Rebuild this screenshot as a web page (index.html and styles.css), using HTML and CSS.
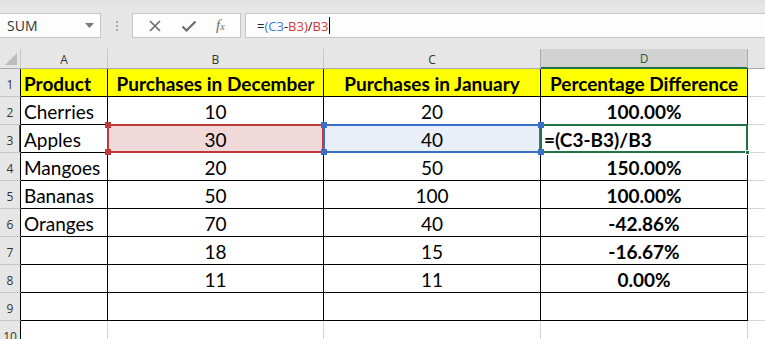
FILE: index.html
```html
<!DOCTYPE html>
<html lang="en">
<head>
    <meta charset="UTF-8">
    <meta name="viewport" content="width=device-width, initial-scale=1.0">
    <title>Percentage Difference</title>
    <link rel="stylesheet" href="styles.css">
</head>
<body>
    <div class="toolbar">
        <div class="name-box">
            <span>SUM</span>
            <svg class="drop" width="9" height="5" viewBox="0 0 9 5"><path d="M0 0h9L4.5 5z" fill="#7a7a7a"/></svg>
        </div>
        <div class="grip"><i></i><i></i><i></i></div>
        <div class="fx-buttons">
            <svg width="14" height="14" viewBox="0 0 14 14"><path d="M2 2l10 10M12 2L2 12" stroke="#6b6b6b" stroke-width="1.6" fill="none"/></svg>
            <svg width="16" height="14" viewBox="0 0 16 14"><path d="M1.5 7.5l4 4L14.5 2.5" stroke="#6b6b6b" stroke-width="2.2" fill="none"/></svg>
            <span class="fx">f<sub>x</sub></span>
        </div>
        <div class="formula">
            <span>=</span><span class="ref-c">(C3</span><span>-</span><span class="ref-b">B3)</span><span>/</span><span class="ref-b">B3</span><span class="caret"></span>
        </div>
    </div>

    <div class="sheet">
        <!-- column headers -->
        <div class="corner"><svg width="12" height="12" viewBox="0 0 12 12"><path d="M12 0v12H0z" fill="#bdbdbd"/></svg></div>
        <div class="colhead">A</div>
        <div class="colhead">B</div>
        <div class="colhead">C</div>
        <div class="colhead active">D</div>
        <div class="colhead last"></div>

        <!-- row 1 -->
        <div class="rowhead">1</div>
        <div class="cell head left">Product</div>
        <div class="cell head">Purchases in December</div>
        <div class="cell head">Purchases in January</div>
        <div class="cell head">Percentage Difference</div>
        <div class="spare"></div>

        <div class="rowhead">2</div>
        <div class="cell left">Cherries</div>
        <div class="cell">10</div>
        <div class="cell">20</div>
        <div class="cell pct">100.00%</div>
        <div class="spare"></div>

        <div class="rowhead current">3</div>
        <div class="cell left">Apples</div>
        <div class="cell ref red">30<b class="h tl"></b><b class="h tr"></b><b class="h bl"></b><b class="h br"></b></div>
        <div class="cell ref blue">40<b class="h tl"></b><b class="h tr"></b><b class="h bl"></b><b class="h br"></b></div>
        <div class="cell editing">=(C3-B3)/B3<b class="fill-handle"></b></div>
        <div class="spare"></div>

        <div class="rowhead">4</div>
        <div class="cell left">Mangoes</div>
        <div class="cell">20</div>
        <div class="cell">50</div>
        <div class="cell pct">150.00%</div>
        <div class="spare"></div>

        <div class="rowhead">5</div>
        <div class="cell left">Bananas</div>
        <div class="cell">50</div>
        <div class="cell">100</div>
        <div class="cell pct">100.00%</div>
        <div class="spare"></div>

        <div class="rowhead">6</div>
        <div class="cell left">Oranges</div>
        <div class="cell">70</div>
        <div class="cell">40</div>
        <div class="cell pct">-42.86%</div>
        <div class="spare"></div>

        <div class="rowhead">7</div>
        <div class="cell left"></div>
        <div class="cell">18</div>
        <div class="cell">15</div>
        <div class="cell pct">-16.67%</div>
        <div class="spare"></div>

        <div class="rowhead">8</div>
        <div class="cell left"></div>
        <div class="cell">11</div>
        <div class="cell">11</div>
        <div class="cell pct">0.00%</div>
        <div class="spare"></div>

        <div class="rowhead">9</div>
        <div class="cell left"></div>
        <div class="cell"></div>
        <div class="cell"></div>
        <div class="cell"></div>
        <div class="spare"></div>

        <div class="rowhead">10</div>
        <div class="blank"></div>
        <div class="blank"></div>
        <div class="blank"></div>
        <div class="blank"></div>
        <div class="spare"></div>
    </div>
</body>
</html>
```

FILE: styles.css
```css
* {
    box-sizing: border-box;
}

body {
    margin: 0;
    background-color: #fff;
    font-family: Lato, "Open Sans", sans-serif;
    overflow: hidden;
}

/* formula bar */
.toolbar {
    height: 49px;
    background-color: #e6e6e6;
    border-top: 3px solid #e1e1e1;
    display: flex;
    align-items: flex-start;
    padding-top: 10px;
    font-family: "Open Sans", sans-serif;
    font-size: 13px;
    color: #222;
}

.name-box {
    width: 101px;
    height: 25px;
    background-color: #fdfdfd;
    border: 1px solid #c6c6c6;
    border-left: none;
    display: flex;
    align-items: center;
    justify-content: space-between;
    padding: 0 6px 0 7px;
    font-size: 14px;
    color: #333;
}

.grip {
    width: 31px;
    height: 25px;
    display: flex;
    flex-direction: column;
    align-items: center;
    justify-content: center;
    gap: 2px;
}

.grip i {
    width: 2px;
    height: 2px;
    background-color: #a9a9a9;
}

.fx-buttons {
    width: 109px;
    height: 25px;
    background-color: #fdfdfd;
    border: 1px solid #c6c6c6;
    display: flex;
    align-items: center;
    justify-content: space-around;
    padding: 0 6px;
}

.fx {
    font-family: "Liberation Serif", serif;
    font-style: italic;
    font-size: 15px;
    color: #6b6b6b;
    line-height: 1;
}

.fx sub {
    font-size: 10px;
    vertical-align: 0;
}

.formula {
    flex: 1;
    height: 25px;
    margin-left: 4px;
    background-color: #fdfdfd;
    border: 1px solid #c6c6c6;
    border-right: none;
    display: flex;
    align-items: center;
    padding-left: 11px;
}

.ref-c {
    color: #3c78d8;
}

.ref-b {
    color: #d03a3a;
}

.caret {
    width: 1px;
    height: 17px;
    background-color: #000;
    margin-left: 1px;
}

/* grid */
.sheet {
    display: grid;
    grid-template-columns: 21px 87px 216px 217px 207px 1fr;
    grid-template-rows: 20px repeat(9, 28px) 28px;
}

.corner,
.colhead {
    background-color: #e6e6e6;
    border-right: 1px solid #c8c8c8;
    border-bottom: 1px solid #ababab;
}

.corner {
    display: flex;
    align-items: flex-end;
    justify-content: flex-end;
    padding: 0 3px 3px 0;
}

.colhead {
    font-family: "Open Sans", sans-serif;
    font-size: 12px;
    color: #333;
    display: flex;
    align-items: center;
    justify-content: center;
    padding-top: 1px;
}

.colhead.active {
    background-color: #d2d2d2;
    color: #1f5f3c;
    border-right-color: #ababab;
    border-bottom: 2px solid #217346;
    box-shadow: -1px 0 0 #ababab;
}

.colhead.last {
    border-right: none;
}

.rowhead {
    background-color: #e6e6e6;
    border-right: 1px solid #000;
    border-bottom: 1px solid #c8c8c8;
    font-family: "Open Sans", sans-serif;
    font-size: 12px;
    color: #333;
    display: flex;
    align-items: flex-end;
    justify-content: center;
    padding-bottom: 3px;
}

.rowhead.current {
    box-shadow: inset -1px 0 0 #217346;
}

.cell {
    position: relative;
    border-right: 1px solid #000;
    border-bottom: 1px solid #000;
    font-size: 19px;
    color: #000;
    display: flex;
    align-items: center;
    justify-content: center;
    padding-top: 1px;
}

.cell.left {
    justify-content: flex-start;
    padding-left: 3px;
}

.cell.head {
    background-color: #ffff00;
    font-weight: bold;
}

.cell.pct {
    font-weight: bold;
}

.spare,
.blank {
    border-right: 1px solid #d4d4d4;
    border-bottom: 1px solid #d4d4d4;
}

.spare {
    border-right: none;
}

/* formula reference highlights */
.cell.ref {
    border-right-color: transparent;
}

.cell.ref::after {
    content: "";
    position: absolute;
    top: -1px;
    left: -1px;
    right: -1px;
    bottom: -1px;
    border: 2px solid;
}

.cell.red {
    background-color: #f2d9d9;
}

.cell.red::after {
    border-color: #c0393b;
}

.cell.blue {
    background-color: #e9eff8;
}

.cell.blue::after {
    border-color: #3a6fc9;
}

.h {
    position: absolute;
    width: 6px;
    height: 6px;
    z-index: 2;
}

.cell.red .h {
    background-color: #c0393b;
}

.cell.blue .h {
    background-color: #3a6fc9;
}

.h.tl { top: -3px; left: -3px; }
.h.tr { top: -3px; right: -4px; }
.h.bl { bottom: -3px; left: -3px; }
.h.br { bottom: -3px; right: -4px; }

.cell.editing {
    justify-content: flex-start;
    padding-left: 3px;
    font-weight: bold;
}

.cell.editing::after {
    content: "";
    position: absolute;
    top: -1px;
    left: -1px;
    right: -1px;
    bottom: -1px;
    border: 2px solid #217346;
}

.fill-handle {
    position: absolute;
    right: -3px;
    bottom: -3px;
    width: 5px;
    height: 5px;
    background-color: #217346;
    border: 1px solid #fff;
    z-index: 2;
}
```
